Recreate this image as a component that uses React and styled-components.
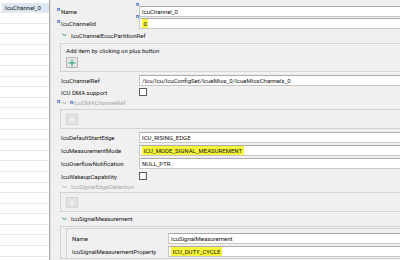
import React from "react";
import styled, { createGlobalStyle } from "styled-components";

const Global = createGlobalStyle`
  html, body { margin: 0; padding: 0; width: 400px; height: 260px; overflow: hidden; background: #f0f0f0; }
  body { font-family: Roboto, "Liberation Sans", Arial, sans-serif; font-size: 6px; color: #141414; }
`;

const Frame = styled.div`
  display: flex;
  width: 400px;
  height: 260px;
  overflow: hidden;
`;

const Sidebar = styled.div`
  width: 50px;
  flex: none;
  background: #fff;
  border-right: 1px solid #a8a8a8;
  padding-top: 3px;
  box-sizing: border-box;
  overflow: hidden;
`;

const ListRow = styled.div`
  height: ${(p) => (p.$first ? 10 : 10.6)}px;
  box-sizing: border-box;
  border-bottom: 1px solid #e9e9e9;
  display: flex;
  align-items: center;
`;

const ListItem = styled.div`
  margin-left: 2px;
  flex: 1;
  height: 100%;
  background: ${(p) => (p.$selected ? "#dce6f0" : "transparent")};
  padding-left: 3px;
  display: flex;
  align-items: center;
  white-space: nowrap;
`;

const Main = styled.div`
  flex: 1;
  min-width: 0;
  padding: 5px 0 0 6px;
  display: flex;
  flex-direction: column;
  border-left: 1px solid #e2e2e2;
`;

const Row = styled.div`
  display: flex;
  align-items: center;
  height: ${(p) => p.$h}px;
  margin-top: ${(p) => p.$mt || 0}px;
  flex: none;
`;

const Label = styled.div`
  position: relative;
  width: ${(p) => p.$w || 82}px;
  padding-left: ${(p) => p.$pl ?? 4}px;
  box-sizing: border-box;
  white-space: nowrap;
  flex: none;
`;

const Badge = styled.span`
  position: absolute;
  left: ${(p) => p.$x}px;
  top: ${(p) => p.$y}px;
  font-size: 5.5px;
  line-height: 4px;
  font-weight: bold;
  color: #1b56bd;
`;

const InputWrap = styled.div`
  position: relative;
  flex: 1;
  min-width: 0;
  height: 11px;
`;

const Input = styled.div`
  height: 100%;
  box-sizing: border-box;
  background: #fff;
  border: 1px solid #c6c6c6;
  border-top-color: #ababab;
  border-right: none;
  padding-left: 2px;
  display: flex;
  align-items: center;
  white-space: nowrap;
  overflow: hidden;
  color: #111;
`;

const Mark = styled.span`
  background: #f6f63a;
  height: 9px;
  line-height: 9px;
  padding: 0 1.5px;
`;

const Check = styled.span`
  width: 6px;
  height: 6px;
  border: 1px solid #5a5a5a;
  background: #fff;
`;

const Header = styled.div`
  position: relative;
  display: flex;
  align-items: center;
  height: ${(p) => p.$h}px;
  padding-left: 5px;
  gap: 4px;
  flex: none;
  color: ${(p) => (p.$disabled ? "#a9a9a9" : "#141414")};
  white-space: nowrap;
`;

const InlineBadge = styled.span`
  font-size: 5.5px;
  font-weight: bold;
  color: #1b56bd;
  margin-right: 0.5px;
  position: relative;
  top: -1.5px;
`;

const Box = styled.div`
  margin-left: 3px;
  margin-top: ${(p) => p.$mt || 0}px;
  border: 1px solid #d2d2d2;
  border-right: none;
  padding: ${(p) => p.$pad || "4px 0 3px 5px"};
  display: flex;
  flex-direction: column;
  align-items: flex-start;
  gap: ${(p) => p.$gap || 0}px;
  flex: none;
`;

const InnerBox = styled.div`
  align-self: stretch;
  border: 1px solid #d2d2d2;
  border-right: none;
  border-bottom: none;
  padding-top: 3px;
  display: flex;
  flex-direction: column;
`;

const Hint = styled.div`
  line-height: 7px;
  height: 7px;
  white-space: nowrap;
`;

const PlusBtn = styled.div`
  width: 12px;
  height: 11px;
  box-sizing: border-box;
  border: 1px solid ${(p) => (p.$disabled ? "#d4d4d4" : "#b9b9b9")};
  background: ${(p) => (p.$disabled ? "#e2e2e2" : "#e6e6e6")};
  display: flex;
  align-items: center;
  justify-content: center;
`;

const Chevron = ({ disabled }) => (
  <svg width="5" height="4" viewBox="0 0 5 4">
    <polyline points="0.6,0.8 2.5,3 4.4,0.8" fill="none" stroke={disabled ? "#b3b3b3" : "#2b9a6b"} strokeWidth="1" />
  </svg>
);

const Plus = ({ disabled }) => (
  <svg width="8" height="8" viewBox="0 0 8 8">
    <path d="M4 0.5V7.5M0.5 4H7.5" stroke={disabled ? "#f7f7f7" : "#2f9e5c"} strokeWidth="1" />
  </svg>
);

const Field = ({ label, value, mark, badges, h = 13, mt, w, pl }) => (
  <Row $h={h} $mt={mt}>
    <Label $w={w} $pl={pl}>
      {badges && <Badge $x={0} $y={-1}>n</Badge>}
      {label}
    </Label>
    <InputWrap>
      {badges && <Badge $x={-3} $y={-4}>n</Badge>}
      <Input>{mark ? <Mark>{value}</Mark> : value}</Input>
    </InputWrap>
  </Row>
);

const CheckField = ({ label, h }) => (
  <Row $h={h}>
    <Label>{label}</Label>
    <Check />
  </Row>
);

export default function App() {
  const rows = Array.from({ length: 24 });
  return (
    <>
      <Global />
      <Frame>
        <Sidebar>
          {rows.map((_, i) => (
            <ListRow key={i} $first={i === 0}>
              <ListItem $selected={i === 0}>{i === 0 ? "IcuChannel_0" : ""}</ListItem>
            </ListRow>
          ))}
        </Sidebar>
        <Main>
          <Field label="Name" value="IcuChannel_0" badges h={12} />
          <Field label="IcuChannelId" value="0" mark badges />
          <Header $h={10}>
            <Chevron />
            <span>IcuChannelEcucPartitionRef</span>
          </Header>
          <Box $mt={3} $pad="3px 0 3px 5px" $gap={3}>
            <Hint>Add item by clicking on plus button</Hint>
            <PlusBtn>
              <Plus />
            </PlusBtn>
          </Box>
          <Field label="IcuChannelRef" value="/Icu/Icu/IcuConfigSet/IcueMios_0/IcueMiosChannels_0" mt={2} />
          <CheckField label="ICU DMA support" h={10} />
          <Header $h={11} $disabled>
            <Badge $x={0} $y={2}>n</Badge>
            <Chevron disabled />
            <span style={{ marginLeft: -1 }}>
              <InlineBadge>n</InlineBadge>IcuDMAChannelRef
            </span>
          </Header>
          <Box $mt={1}>
            <PlusBtn $disabled>
              <Plus disabled />
            </PlusBtn>
          </Box>
          <Field label="IcuDefaultStartEdge" value="ICU_RISING_EDGE" mt={2} />
          <Field label="IcuMeasurementMode" value="ICU_MODE_SIGNAL_MEASUREMENT" mark />
          <Field label="IcuOverflowNotification" value="NULL_PTR" />
          <CheckField label="IcuWakeupCapability" h={12} />
          <Header $h={9} $disabled>
            <Chevron disabled />
            <span>IcuSignalEdgeDetection</span>
          </Header>
          <Box $mt={1}>
            <PlusBtn $disabled>
              <Plus disabled />
            </PlusBtn>
          </Box>
          <Header $h={13}>
            <Chevron />
            <span>IcuSignalMeasurement</span>
          </Header>
          <Box $mt={1} $pad="1px 0 0 5px">
            <InnerBox>
              <Field label="Name" value="IcuSignalMeasurement" w={101} pl={5} />
              <Field label="IcuSignalMeasurementProperty" value="ICU_DUTY_CYCLE" mark w={101} pl={5} />
            </InnerBox>
          </Box>
        </Main>
      </Frame>
    </>
  );
}
